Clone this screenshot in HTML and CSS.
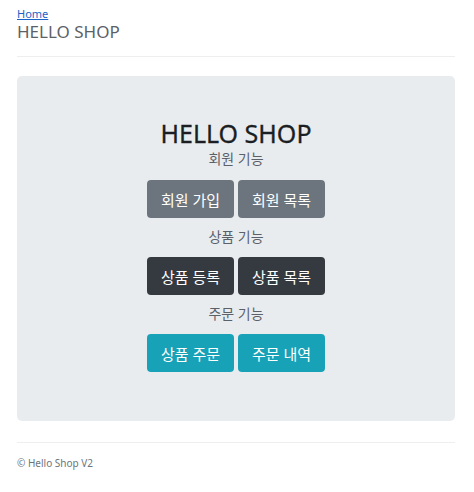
FILE: index.html
```html
<!DOCTYPE html>
<html lang="ko">
<head>
  <meta charset="UTF-8">
  <meta name="viewport" content="width=device-width, initial-scale=1.0">
  <title>HELLO SHOP</title>
  <link rel="stylesheet" href="styles.css">
</head>
<body>
  <div class="container">
    <div class="header">
      <a href="#" class="home-link">Home</a>
      <h3 class="header-title">HELLO SHOP</h3>
    </div>

    <div class="jumbotron">
      <h1 class="shop-title">HELLO SHOP</h1>

      <p class="group-label">회원 기능</p>
      <div class="btn-row">
        <a href="#" class="btn btn-secondary">회원 가입</a>
        <a href="#" class="btn btn-secondary">회원 목록</a>
      </div>

      <p class="group-label">상품 기능</p>
      <div class="btn-row">
        <a href="#" class="btn btn-dark">상품 등록</a>
        <a href="#" class="btn btn-dark">상품 목록</a>
      </div>

      <p class="group-label">주문 기능</p>
      <div class="btn-row">
        <a href="#" class="btn btn-info">상품 주문</a>
        <a href="#" class="btn btn-info">주문 내역</a>
      </div>
    </div>

    <div class="footer">
      <p>&copy; Hello Shop V2</p>
    </div>
  </div>
</body>
</html>
```

FILE: styles.css
```css
body {
  font-family: 'Noto Sans', 'Noto Sans CJK KR', sans-serif;
  margin: 0;
  padding: 0;
  background-color: #FFFFFF;
  color: #212529;
}

.container {
  padding: 0 19px 0 17px;
}

.header {
  padding-top: 7px;
  padding-bottom: 13px;
  border-bottom: 1px solid #EEEEEE;
}

.home-link {
  display: block;
  font-size: 11px;
  line-height: 14px;
  color: #1A63C8;
}

.header-title {
  margin: 0;
  font-size: 17px;
  font-weight: 400;
  line-height: 22px;
  color: #5B6167;
}

.jumbotron {
  margin-top: 19px;
  padding: 42px 16px 49px;
  background-color: #E9ECEF;
  border-radius: 5px;
  display: flex;
  flex-direction: column;
  align-items: center;
}

.shop-title {
  margin: 0;
  font-size: 25px;
  font-weight: 400;
  line-height: 30px;
  color: #1B1F23;
  -webkit-text-stroke: 0.3px #1B1F23;
}

.group-label {
  margin: 9px 0 10px;
  font-size: 14px;
  line-height: 20px;
  color: #5A6169;
}

.shop-title + .group-label {
  margin-top: 1px;
  margin-bottom: 11px;
}

.btn-row {
  display: flex;
  gap: 4px;
}

.btn {
  display: flex;
  align-items: center;
  justify-content: center;
  width: 87px;
  height: 38px;
  border-radius: 4px;
  font-size: 15px;
  color: #FFFFFF;
  text-decoration: none;
  box-sizing: border-box;
}

.btn-secondary {
  background-color: #6C757D;
}

.btn-dark {
  background-color: #343A40;
}

.btn-info {
  background-color: #17A2B8;
}

.footer {
  margin-top: 21px;
  border-top: 1px solid #EEEEEE;
  padding-top: 12px;
}

.footer p {
  margin: 0;
  font-size: 10px;
  line-height: 16px;
  color: #6C757D;
}
```
